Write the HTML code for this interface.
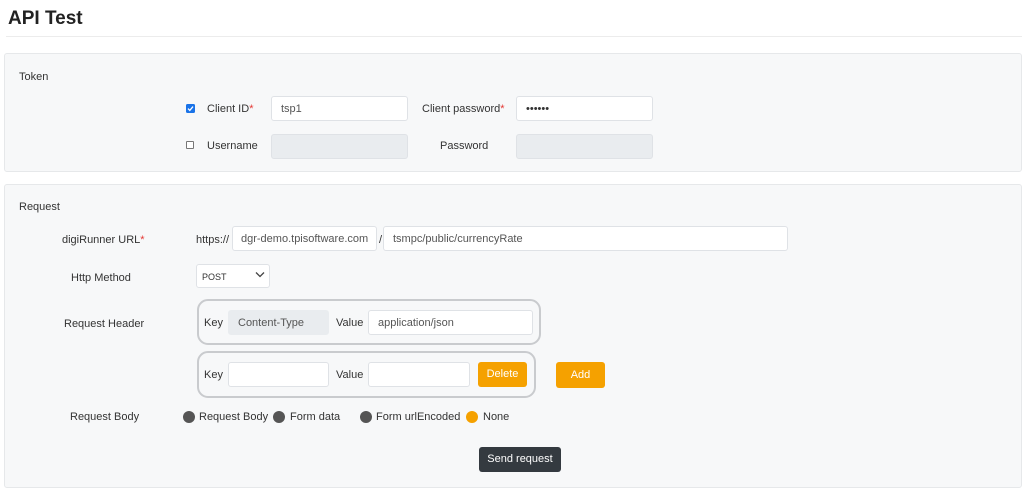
<!DOCTYPE html>
<html><head><meta charset="utf-8"><style>
*{box-sizing:border-box;margin:0;padding:0}
body{width:1024px;height:492px;background:#fff;font-family:"Liberation Sans",sans-serif;font-size:11px;color:#333;position:relative;overflow:hidden}
.a{position:absolute}
.t{position:absolute;white-space:nowrap;line-height:14px}
.panel{position:absolute;left:4px;right:2px;background:#f7f8f9;border:1px solid #e6e8ea;border-radius:3px}
.in{position:absolute;background:#fff;border:1px solid #dfe2e6;border-radius:3px;height:25px;padding:5px 9px;color:#555;white-space:nowrap;overflow:hidden;line-height:14px}
.dis{background:#e9ecef}
.req{color:#e53935}
.box{position:absolute;border:2px solid #c9cbce;border-radius:11px}
.btn{position:absolute;background:#f5a100;color:#fff;border-radius:3px;text-align:center;line-height:26px;font-size:11px}
.rd{position:absolute;width:12px;height:12px;border-radius:50%;background:#555}
</style></head><body>
<div class="t" style="left:8px;top:8px;font-size:19px;font-weight:bold;color:#222;line-height:22px">API Test</div>
<div class="a" style="left:6px;right:2px;top:36px;height:1px;background:#ececec"></div>

<div class="panel" style="top:53px;height:119px"></div>
<div class="t" style="left:19px;top:70px">Token</div>
<svg class="a" style="left:186px;top:104px" width="9" height="9" viewBox="0 0 9 9"><rect width="9" height="9" rx="1.5" fill="#1a73e8"/><path d="M2 4.6L3.8 6.4L7 2.6" stroke="#fff" stroke-width="1.3" fill="none"/></svg>
<div class="t" style="left:207px;top:102px">Client ID<span class="req">*</span></div>
<div class="in" style="left:271px;top:96px;width:137px">tsp1</div>
<div class="t" style="left:422px;top:102px">Client password<span class="req">*</span></div>
<div class="in" style="left:516px;top:96px;width:137px;color:#333">••••••</div>
<div class="a" style="left:186px;top:141px;width:8px;height:8px;border:1px solid #777;border-radius:1px;background:#fff"></div>
<div class="t" style="left:207px;top:139px">Username</div>
<div class="in dis" style="left:271px;top:134px;width:137px"></div>
<div class="t" style="left:440px;top:139px">Password</div>
<div class="in dis" style="left:516px;top:134px;width:137px"></div>

<div class="panel" style="top:184px;height:304px"></div>
<div class="t" style="left:19px;top:200px">Request</div>
<div class="t" style="left:62px;top:233px">digiRunner URL<span class="req">*</span></div>
<div class="t" style="left:196px;top:233px">https://</div>
<div class="in" style="left:232px;top:226px;width:145px;padding-left:8px">dgr-demo.tpisoftware.com</div>
<div class="t" style="left:379px;top:233px">/</div>
<div class="in" style="left:383px;top:226px;width:405px">tsmpc/public/currencyRate</div>
<div class="t" style="left:71px;top:271px">Http Method</div>
<div class="in" style="left:196px;top:264px;width:74px;height:24px;font-size:9px;padding:5px 5px;color:#333">POST</div>
<svg class="a" style="left:255px;top:271px" width="10" height="7" viewBox="0 0 10 7"><path d="M1 1.5L5 5.5L9 1.5" stroke="#444" stroke-width="1.3" fill="none"/></svg>

<div class="t" style="left:64px;top:317px">Request Header</div>
<div class="box" style="left:197px;top:299px;width:344px;height:46px"></div>
<div class="t" style="left:204px;top:316px">Key</div>
<div class="in dis" style="left:228px;top:310px;width:101px;border-color:#e9ecef">Content-Type</div>
<div class="t" style="left:336px;top:316px">Value</div>
<div class="in" style="left:368px;top:310px;width:165px">application/json</div>

<div class="box" style="left:197px;top:351px;width:339px;height:47px"></div>
<div class="t" style="left:204px;top:368px">Key</div>
<div class="in" style="left:228px;top:362px;width:101px"></div>
<div class="t" style="left:336px;top:368px">Value</div>
<div class="in" style="left:368px;top:362px;width:102px"></div>
<div class="btn" style="left:478px;top:362px;width:49px;height:25px;line-height:25px">Delete</div>
<div class="btn" style="left:556px;top:362px;width:49px;height:26px">Add</div>

<div class="t" style="left:70px;top:410px">Request Body</div>
<div class="rd" style="left:183px;top:411px"></div><div class="t" style="left:199px;top:410px">Request Body</div>
<div class="rd" style="left:273px;top:411px"></div><div class="t" style="left:290px;top:410px">Form data</div>
<div class="rd" style="left:360px;top:411px"></div><div class="t" style="left:376px;top:410px">Form urlEncoded</div>
<div class="rd" style="left:466px;top:411px;background:#f5a100"></div><div class="t" style="left:483px;top:410px">None</div>

<div class="btn" style="left:479px;top:447px;width:82px;height:25px;line-height:25px;background:#343a40">Send request</div>
</body></html>
